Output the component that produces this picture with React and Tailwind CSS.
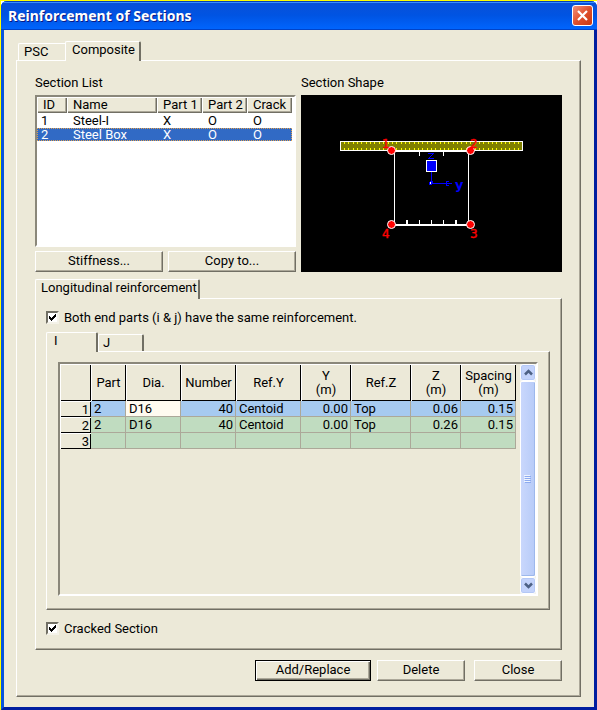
import React, { useState } from "react";

const panel =
  "border border-t-white border-l-white border-r-[#716f64] border-b-[#716f64] shadow-[inset_-1px_-1px_0_#aca899]";

const sunken =
  "border-2 border-t-[#8a877a] border-l-[#8a877a] border-r-white border-b-white";

function Tab({ selected, className, onClick, children }) {
  return (
    <button
      type="button"
      role="tab"
      aria-selected={selected}
      onClick={onClick}
      className={`flex items-start rounded-t-[2px] border-t border-l border-r-2 border-t-white border-l-white border-r-[#716f64] bg-[#ece9d8] text-left whitespace-nowrap ${
        selected ? "relative -mb-px h-5" : "h-[17px]"
      } ${className}`}
    >
      {children}
    </button>
  );
}

function PushButton({ primary, className = "", children }) {
  return (
    <button
      type="button"
      className={`flex h-[21px] items-center justify-center bg-[#ece9d8] pb-[2px] ${
        primary
          ? "border border-black shadow-[inset_1px_1px_0_#fff,inset_-1px_-1px_0_#716f64,inset_-2px_-2px_0_#aca899]"
          : "border border-t-white border-l-white border-r-[#716f64] border-b-[#716f64] shadow-[inset_-1px_-1px_0_#aca899]"
      } ${className}`}
    >
      {children}
    </button>
  );
}

function CheckBox({ label }) {
  const [on, setOn] = useState(true);
  return (
    <label className="flex h-[13px] items-center gap-[5px]">
      <span className="grid">
        <input
          type="checkbox"
          checked={on}
          onChange={() => setOn(!on)}
          className="col-start-1 row-start-1 size-[13px] appearance-none border-2 border-t-[#716f64] border-l-[#716f64] border-r-[#f4f2e8] border-b-[#f4f2e8] bg-white"
        />
        {on && (
          <svg
            viewBox="0 0 13 13"
            className="pointer-events-none col-start-1 row-start-1 size-[13px]"
            shapeRendering="crispEdges"
          >
            <path d="M3 5h1v1h1v1h1v-1h1v-1h1v-1h1v-1h1v3h-1v1h-1v1h-1v1h-1v1h-1v-1h-1v-1h-1z" />
          </svg>
        )}
      </span>
      {label}
    </label>
  );
}

const sections = [
  ["1", "Steel-I", "X", "O", "O"],
  ["2", "Steel Box", "X", "O", "O"],
];

function SectionList() {
  const [current, setCurrent] = useState(1);
  return (
    <div className={`h-[152px] bg-white pr-[2px] ${sunken}`}>
      <table className="w-full table-fixed border-collapse">
        <colgroup>
          <col className="w-[30px]" />
          <col className="w-[90px]" />
          <col className="w-[45px]" />
          <col className="w-[45px]" />
          <col className="w-[45px]" />
        </colgroup>
        <thead>
          <tr className="h-4 bg-[#ece9d8]">
            {["ID", "Name", "Part 1", "Part 2", "Crack"].map((h) => (
              <th
                key={h}
                className="p-0 pl-[6px] text-left leading-4 font-normal whitespace-nowrap shadow-[inset_1px_1px_0_#fff,inset_-1px_-1px_0_#716f64,inset_-2px_-2px_0_#aca899]"
              >
                {h}
              </th>
            ))}
          </tr>
        </thead>
        <tbody>
          {sections.map((row, i) => (
            <tr
              key={row[0]}
              onClick={() => setCurrent(i)}
              className={
                i === current
                  ? "bg-[#316ac5] text-white outline-1 -outline-offset-1 outline-[#e0a050] outline-dotted"
                  : ""
              }
            >
              {row.map((cell, j) => (
                <td
                  key={j}
                  className={`p-0 ${i === 0 ? "leading-[15px]" : "leading-[13px]"} ${j === 0 ? "pl-1" : "pl-[6px]"}`}
                >
                  {cell}
                </td>
              ))}
            </tr>
          ))}
        </tbody>
      </table>
    </div>
  );
}

function SectionShape() {
  const ticks = Array.from({ length: 41 }, (_, i) => 43 + i * 4.35);
  const nodes = [
    [90.5, 55.5],
    [169.5, 55.5],
    [90.5, 129.5],
    [169.5, 129.5],
  ];
  return (
    <div className="flex h-[177px] justify-center bg-black">
      <svg
        width="261"
        height="177"
        viewBox="0 0 261 177"
        role="img"
        aria-label="Steel box section"
        fontFamily="DejaVu Sans, sans-serif"
      >
        <g shapeRendering="crispEdges">
          <rect x="39.5" y="46.5" width="182" height="9" fill="#808000" stroke="#fff" />
          {ticks.map((x, i) => (
            <path
              key={i}
              d={`M${Math.round(x)}.5 47v2M${Math.round(x)}.5 53v2`}
              stroke="#ffff00"
            />
          ))}
          <path
            d="M93.5 56v73M167.5 56v73M118.5 57v4M142.5 57v4M118.5 125v4M130.5 125v4M142.5 125v4"
            stroke="#fff"
          />
          <path d="M91 56h79M91 130h79M106 125v4M155 125v4" stroke="#fff" strokeWidth="2" />
          <path
            d="M127 58h6v1h-6zM131 59h1v1h-1zM130 60h1v1h-1zM129 61h1v1h-1zM128 62h1v1h-1zM127 63h6v1h-6z"
            fill="#0000ff"
          />
          <rect x="125.5" y="65.5" width="10" height="11" fill="#0000ff" stroke="#fff" />
          <path d="M130.5 77v11M131 88.5h20M145.500 86v5M146 86.500h2M146 90.500h2" stroke="#0000ff" fill="none" />
          <circle cx="130" cy="88" r="2" fill="#0000ff" />
          <rect x="129" y="87" width="1" height="2" fill="#fff" />
        </g>
        {nodes.map(([x, y]) => (
          <circle key={`${x}-${y}`} cx={x} cy={y} r="4" fill="#ff0000" stroke="#fff" />
        ))}
        <g fill="#ff0000" stroke="#ff0000" strokeWidth="0.4" fontSize="12">
          <text x="81" y="53">1</text>
          <text x="169" y="53">2</text>
          <text x="81" y="143">4</text>
          <text x="169" y="143">3</text>
        </g>
        <text x="154" y="94" fontSize="13" fontWeight="bold" fill="#0000ff">
          y
        </text>
      </svg>
    </div>
  );
}

const columns = [
  { name: "Part", width: "w-[35px]" },
  { name: "Dia.", width: "w-[55px]" },
  { name: "Number", width: "w-[55px]", right: true },
  { name: "Ref.Y", width: "w-[65px]" },
  { name: "Y", unit: "(m)", width: "w-[50px]", right: true },
  { name: "Ref.Z", width: "w-[60px]" },
  { name: "Z", unit: "(m)", width: "w-[50px]", right: true },
  { name: "Spacing", unit: "(m)", width: "w-[55px]", right: true },
];

const bars = [
  ["2", "D16", "40", "Centoid", "0.00", "Top", "0.06", "0.15"],
  ["2", "D16", "40", "Centoid", "0.00", "Top", "0.26", "0.15"],
  ["", "", "", "", "", "", "", ""],
];

const headCell =
  "p-0 font-normal shadow-[inset_1px_1px_0_#fff,inset_-1px_-1px_0_#000]";

function BarTable() {
  return (
    <table className="min-w-0 flex-1 table-fixed border-separate border-spacing-0 self-start">
      <colgroup>
        <col className="w-[31px]" />
        {columns.map((c) => (
          <col key={c.name} className={c.width} />
        ))}
      </colgroup>
      <thead>
        <tr className="h-[37px]">
          <th className={headCell} aria-label="Row" />
          {columns.map((c) => (
            <th key={c.name} className={`leading-[14px] ${headCell}`}>
              {c.name}
              {c.unit && (
                <>
                  <br />
                  {c.unit}
                </>
              )}
            </th>
          ))}
        </tr>
      </thead>
      <tbody>
        {bars.map((row, i) => (
          <tr key={i} className={`h-4 ${i === 0 ? "bg-[#a6caf0]" : "bg-[#c0dcc0]"}`}>
            <th
              scope="row"
              className="bg-[#ece9d8] p-0 pr-[2px] text-right leading-[15px] font-normal shadow-[inset_1px_1px_0_#fff,inset_-1px_-1px_0_#000]"
            >
              {i + 1}
            </th>
            {row.map((cell, j) => (
              <td
                key={j}
                className={`border-r border-b border-[#aca899] p-0 leading-[15px] ${
                  columns[j].right ? "pr-[2px] text-right" : "pl-[3px]"
                } ${i === 0 && j === 1 ? "bg-[#fffbf0]" : ""}`}
              >
                {cell}
              </td>
            ))}
          </tr>
        ))}
      </tbody>
    </table>
  );
}

function Arrow({ down }) {
  return (
    <button
      type="button"
      aria-label={down ? "Scroll down" : "Scroll up"}
      className="flex h-[17px] items-center justify-center rounded-[3px] border border-white bg-[#c3d3fb] shadow-[inset_0_0_0_1px_#b4c8f6]"
    >
      <svg width="9" height="7" viewBox="0 0 9 7">
        <path
          d={down ? "M1 1.500l3.500 3.500l3.500-3.500" : "M1 5.500l3.500-3.500l3.500 3.500"}
          fill="none"
          stroke="#4d6185"
          strokeWidth="2.500"
        />
      </svg>
    </button>
  );
}

function ScrollBar() {
  return (
    <div className="flex w-4 flex-col bg-[#f3f3ec]">
      <Arrow />
      <div className="flex flex-1 flex-col items-center justify-center gap-px rounded-[2px] border border-white bg-linear-to-r from-[#c9d7fc] to-[#b7cbf8] shadow-[inset_-1px_-1px_0_#9db8ec]">
        {[0, 1, 2, 3].map((n) => (
          <span key={n} className="h-px w-[6px] bg-[#8caaf0] shadow-[-1px_-1px_0_#eef4fe]" />
        ))}
      </div>
      <Arrow down />
    </div>
  );
}

export default function App() {
  const [end, setEnd] = useState("I");
  return (
    <div className="border-t border-l border-[#ffff00] bg-white font-[Roboto,sans-serif] text-[13px] leading-4 text-black">
      <div className="overflow-hidden rounded-t-[6px] bg-[#0831d9]">
        <header className="flex h-[29px] items-center justify-between bg-linear-to-b from-[#0a4fd6] via-[#0054e3] via-50% to-[#0066ff] pr-[4px] pl-[7px] shadow-[inset_0_1px_0_#0a3fb0,inset_0_2px_0_#3a90ff,inset_0_-1px_0_#0043c8]">
          <h1 className="font-['Noto_Sans',sans-serif] text-[14px] font-bold text-white [text-shadow:1px_1px_0_#0a1883]">
            Reinforcement of Sections
          </h1>
          <button
            type="button"
            aria-label="Close window"
            className="flex size-[21px] items-center justify-center rounded-[3px] border border-white bg-linear-to-br from-[#f0907a] via-[#e0502c] to-[#c83810]"
          >
            <svg width="13" height="13" viewBox="0 0 13 13">
              <path d="M2 2l9 9M11 2l-9 9" stroke="#fff" strokeWidth="2.200" />
            </svg>
          </button>
        </header>
        <main className="border-x-[3px] border-b-[3px] border-l-[#0855dd] border-r-[#001ea0] border-b-[#001ea0]">
          <div className="bg-[#ece9d8] pt-[11px] pr-[13px] pb-[10px] pl-3">
            <div role="tablist" className="flex items-end pl-[2px]">
              <button
                type="button"
                role="tab"
                aria-selected="false"
                className="h-[17px] w-[47px] rounded-tl-[2px] border-t border-l border-white pl-[5px] text-left"
              >
                PSC
              </button>
              <Tab selected className="w-[76px] pl-[6px]">
                Composite
              </Tab>
            </div>

            <div className={`pt-3 pr-[18px] pb-[15px] pl-[18px] ${panel}`}>
              <div className="grid grid-cols-2 gap-[5px]">
                <section className="flex flex-col">
                  <h2 className="pt-[2px] pb-1">Section List</h2>
                  <SectionList />
                  <div className="mt-1 grid grid-cols-2 gap-[5px]">
                    <PushButton>Stiffness...</PushButton>
                    <PushButton>Copy to...</PushButton>
                  </div>
                </section>
                <section>
                  <h2 className="pt-[2px] pb-1">Section Shape</h2>
                  <SectionShape />
                </section>
              </div>

              <div role="tablist" className="mt-[7px] flex items-end">
                <Tab selected className="w-[165px] pl-[5px]">
                  Longitudinal reinforcement
                </Tab>
              </div>
              <div className={`pt-3 pr-[11px] pb-[14px] pl-[10px] ${panel}`}>
                <CheckBox label="Both end parts (i & j) have the same reinforcement." />

                <div role="tablist" className="mt-2 flex items-end">
                  <Tab
                    selected={end === "I"}
                    onClick={() => setEnd("I")}
                    className="w-[52px] pl-[7px]"
                  >
                    I
                  </Tab>
                  <Tab
                    selected={end === "J"}
                    onClick={() => setEnd("J")}
                    className="w-[46px] pl-1"
                  >
                    J
                  </Tab>
                </div>
                <div className={`px-[11px] pt-[10px] pb-[13px] ${panel}`}>
                  <div className={`flex h-[234px] gap-1 ${sunken}`}>
                    <BarTable />
                    <ScrollBar />
                  </div>
                </div>

                <div className="mt-3">
                  <CheckBox label="Cracked Section" />
                </div>
              </div>

              <div className="mt-[10px] flex justify-end">
                <PushButton primary className="mr-[6px] w-[116px]">
                  Add/Replace
                </PushButton>
                <PushButton className="mr-[9px] w-[88px]">Delete</PushButton>
                <PushButton className="w-[88px]">Close</PushButton>
              </div>
            </div>
          </div>
        </main>
      </div>
    </div>
  );
}
